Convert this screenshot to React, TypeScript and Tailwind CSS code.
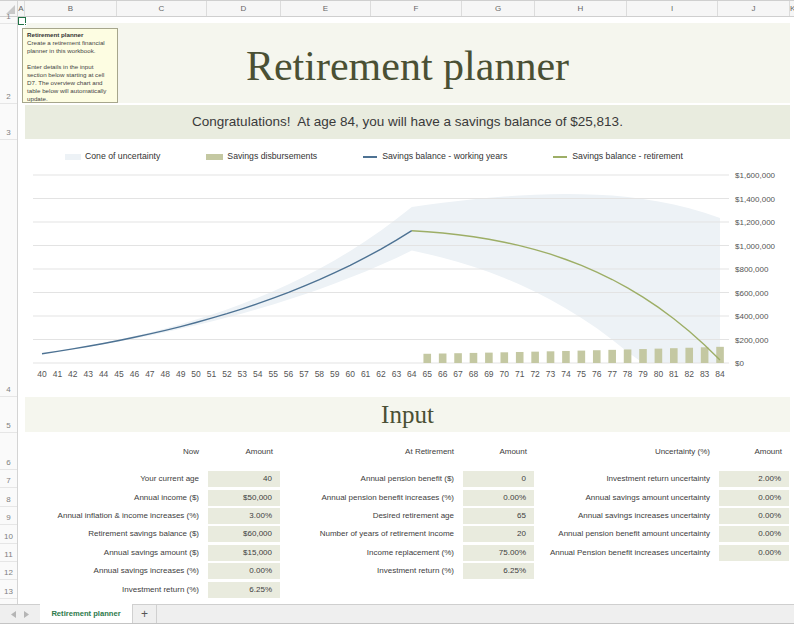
import React from 'react'

const GRID = 'grid grid-cols-[7px_92px_90px_74px_90px_91px_73px_92px_91px_72px_1fr]'
const COLS = ['A', 'B', 'C', 'D', 'E', 'F', 'G', 'H', 'I', 'J', 'K']

const ROWS = [
  { n: 1, h: 'h-[7px]' },
  { n: 2, h: 'h-[80px]' },
  { n: 3, h: 'h-[36px]' },
  { n: 4, h: 'h-[257px]' },
  { n: 5, h: 'h-[36px]' },
  { n: 6, h: 'h-[37px]' },
  { n: 7, h: 'h-[18.4px]' },
  { n: 8, h: 'h-[18.4px]' },
  { n: 9, h: 'h-[18.4px]' },
  { n: 10, h: 'h-[18.4px]' },
  { n: 11, h: 'h-[18.4px]' },
  { n: 12, h: 'h-[18.4px]' },
  { n: 13, h: 'h-[18.4px]' },
]

const NOW = [
  ['Your current age', '40'],
  ['Annual income ($)', '$50,000'],
  ['Annual inflation & income increases (%)', '3.00%'],
  ['Retirement savings balance ($)', '$60,000'],
  ['Annual savings amount ($)', '$15,000'],
  ['Annual savings increases (%)', '0.00%'],
  ['Investment return (%)', '6.25%'],
]
const AT_RETIREMENT = [
  ['Annual pension benefit ($)', '0'],
  ['Annual pension benefit increases (%)', '0.00%'],
  ['Desired retirement age', '65'],
  ['Number of years of retirement income', '20'],
  ['Income replacement (%)', '75.00%'],
  ['Investment return (%)', '6.25%'],
]
const UNCERTAINTY = [
  ['Investment return uncertainty', '2.00%'],
  ['Annual savings amount uncertainty', '0.00%'],
  ['Annual savings increases uncertainty', '0.00%'],
  ['Annual pension benefit amount uncertainty', '0.00%'],
  ['Annual Pension benefit increases uncertainty', '0.00%'],
]

// ---- chart model ----
function withdrawal(age: number) {
  return 0.75 * 50000 * Math.pow(1.03, age - 40)
}
function simulate(rate: number) {
  const out: number[] = []
  let b = 60000
  for (let age = 40; age <= 84; age++) {
    b = age < 65 ? b * (1 + rate) + 15000 : Math.max(0, b * (1 + rate) - withdrawal(age))
    out.push(b)
  }
  return out
}
const AGES = Array.from({ length: 45 }, (_, i) => 40 + i)
const base = simulate(0.0625)
const hi = simulate(0.0725)
const lo = simulate(0.0525)
const X = (age: number) => 17 + (age - 40) * 15.41
const Y = (v: number) => 189 - (v * 23.5) / 200000

const pts = (ages: number[], vals: number[]) =>
  ages.map((a) => `${X(a).toFixed(1)},${Y(vals[a - 40]).toFixed(1)}`).join(' ')

function Chart() {
  const working = pts(AGES.filter((a) => a <= 64), base)
  const retire = pts(AGES.filter((a) => a >= 64), base)
  const cone = pts(AGES, hi) + ' ' + pts([...AGES].reverse(), lo)
  const grid = Array.from({ length: 9 }, (_, k) => k * 200000)
  return (
    <svg width={765} height={223} className="overflow-visible block" style={{ fontFamily: '"Liberation Sans", Arial, sans-serif' }}>
      <polygon points={cone} fill="#edf2f6" />
      {grid.map((v) => (
        <line key={v} x1={8} x2={704} y1={Y(v)} y2={Y(v)} stroke="#e3e3e3" strokeWidth={1} />
      ))}
      {AGES.filter((a) => a >= 65).map((a) => {
        const y = Y(withdrawal(a))
        return <rect key={a} x={X(a) - 3.8} y={y} width={7.6} height={189 - y} fill="#c4c8a2" />
      })}
      <polyline points={working} fill="none" stroke="#4d7293" strokeWidth={1.4} />
      <polyline points={retire} fill="none" stroke="#9dae66" strokeWidth={1.4} />
      {grid.map((v) => (
        <text key={v} x={710} y={Y(v) + 3} fontSize={8} fill="#555">
          ${v.toLocaleString('en-US')}
        </text>
      ))}
      {AGES.map((a) => (
        <text key={a} x={X(a)} y={203} fontSize={8.5} fill="#555" textAnchor="middle">
          {a}
        </text>
      ))}
    </svg>
  )
}

function Legend() {
  return (
    <div className="flex items-center h-[34px] pl-[40px] gap-[46px] text-[8.7px] text-[#333]">
      <div className="flex items-center gap-[4px]">
        <span className="w-[16px] h-[6px] bg-[#edf2f6]" />
        <span>Cone of uncertainty</span>
      </div>
      <div className="flex items-center gap-[4px]">
        <span className="w-[17px] h-[6px] bg-[#c4c8a2]" />
        <span>Savings disbursements</span>
      </div>
      <div className="flex items-center gap-[5px]">
        <span className="w-[14px] h-[1.5px] bg-[#4d7293]" />
        <span>Savings balance - working years</span>
      </div>
      <div className="flex items-center gap-[5px]">
        <span className="w-[14px] h-[1.5px] bg-[#9dae66]" />
        <span>Savings balance - retirement</span>
      </div>
    </div>
  )
}

function Label({ text, span }: { text: string; span: string }) {
  return <div className={`${span} flex items-center justify-end pr-[8px] whitespace-nowrap`}>{text}</div>
}

function Value({ text, span }: { text: string; span: string }) {
  return (
    <div className={`${span} flex items-center`}>
      <div className="mx-[1px] w-full h-[16px] bg-[#e9ebde] flex items-center justify-end pr-[8px]">{text}</div>
    </div>
  )
}

export default function App() {
  return (
    <div className="relative w-[794px] h-[624px] overflow-hidden bg-white flex flex-col" style={{ fontFamily: '"Liberation Sans", Arial, sans-serif' }}>
      {/* column headers */}
      <div className="flex h-[17px] shrink-0 bg-[#f6f6f6] border-t border-[#cfcfcf] border-b border-b-[#cfcfcf]">
        <div className="w-[18px] shrink-0 border-r border-[#d6d6d6] flex items-end justify-end p-[2px]">
          <svg width="9" height="9" viewBox="0 0 9 9">
            <polygon points="9,0 9,9 0,9" fill="#c9c9c9" />
          </svg>
        </div>
        <div className={`${GRID} flex-1`}>
          {COLS.map((c) => (
            <div key={c} className="flex items-center justify-center text-[8px] text-[#666] border-r border-[#dcdcdc]">
              {c}
            </div>
          ))}
        </div>
      </div>

      <div className="flex flex-1 min-h-0">
        {/* row headers */}
        <div className="w-[18px] shrink-0 flex flex-col border-r border-[#d4d4d4] bg-[#fafafa]">
          {ROWS.map((r) => (
            <div key={r.n} className={`${r.h} shrink-0 flex items-end justify-center pb-[2px] text-[8px] leading-none text-[#808080] border-b border-[#e6e6e6]`}>
              {r.n}
            </div>
          ))}
          <div className="flex-1" />
        </div>

        {/* sheet */}
        <div className="flex-1 flex flex-col text-[8px] text-[#404040]">
          <div className="h-[7px] shrink-0" />
          <div className={`${GRID} h-[80px] shrink-0`}>
            <div className="col-start-2 col-span-9 mb-[1px] -mt-[1px] pt-[6px] bg-[#f5f6ee] flex items-center justify-center">
              <span className="text-[42px] leading-none text-[#4a5034]" style={{ fontFamily: '"Liberation Serif", Georgia, serif' }}>
                Retirement planner
              </span>
            </div>
          </div>
          <div className={`${GRID} h-[36px] shrink-0`}>
            <div className="col-start-2 col-span-9 my-[1px] bg-[#e9ecdf] flex items-center justify-center text-[13.5px] text-[#3a3a3a] whitespace-pre">
              Congratulations!  At age 84, you will have a savings balance of $25,813.
            </div>
          </div>
          <div className={`${GRID} h-[257px] shrink-0`}>
            <div className="col-start-2 col-span-9 flex flex-col">
              <Legend />
              <Chart />
            </div>
          </div>
          <div className={`${GRID} h-[36px] shrink-0`}>
            <div className="col-start-2 col-span-9 mb-[1px] bg-[#f5f6ee] flex items-center justify-center">
              <span className="text-[25px] leading-none text-[#4a5034]" style={{ fontFamily: '"Liberation Serif", Georgia, serif' }}>
                Input
              </span>
            </div>
          </div>
          <div className={`${GRID} h-[37px] shrink-0`}>
            <Label span="col-start-2 col-span-2" text="Now" />
            <Label span="col-start-4" text="Amount" />
            <Label span="col-start-5 col-span-2" text="At Retirement" />
            <Label span="col-start-7" text="Amount" />
            <Label span="col-start-8 col-span-2" text="Uncertainty (%)" />
            <Label span="col-start-10" text="Amount" />
          </div>
          {NOW.map((row, i) => (
            <div key={i} className={`${GRID} h-[18.4px] shrink-0`}>
              <Label span="col-start-2 col-span-2" text={row[0]} />
              <Value span="col-start-4" text={row[1]} />
              {AT_RETIREMENT[i] && (
                <>
                  <Label span="col-start-5 col-span-2" text={AT_RETIREMENT[i][0]} />
                  <Value span="col-start-7" text={AT_RETIREMENT[i][1]} />
                </>
              )}
              {UNCERTAINTY[i] && (
                <>
                  <Label span="col-start-8 col-span-2" text={UNCERTAINTY[i][0]} />
                  <Value span="col-start-10" text={UNCERTAINTY[i][1]} />
                </>
              )}
            </div>
          ))}
          <div className="flex-1" />
        </div>
      </div>

      {/* sheet tabs */}
      <div className="h-[20px] shrink-0 flex bg-[#efefef] border-t border-[#cfcfcf] border-b border-b-[#c4c4c4]">
        <div className="w-[40px] flex items-center justify-center gap-[8px]">
          <svg width="5" height="7" viewBox="0 0 5 7"><polygon points="5,0 5,7 0,3.5" fill="#b5b5b5" /></svg>
          <svg width="5" height="7" viewBox="0 0 5 7"><polygon points="0,0 0,7 5,3.5" fill="#b5b5b5" /></svg>
        </div>
        <div className="w-[93px] bg-white -mt-[1px] flex items-center justify-center text-[7.6px] font-bold text-[#2d7a4c] border-r border-[#d0d0d0]">
          Retirement planner
        </div>
        <div className="w-[24px] flex items-center justify-center text-[12px] leading-none text-[#555] border-r border-[#d0d0d0]">+</div>
      </div>

      {/* selected cell A1 */}
      <div className="absolute left-[18px] top-[17px] w-[8px] h-[8px] border-[1.5px] border-[#217346]" />
      <div className="absolute left-[24px] top-[23px] w-[3px] h-[3px] bg-[#217346] border border-white" />

      {/* input message tooltip */}
      <div className="absolute left-[22px] top-[28px] w-[96px] h-[75px] border border-[#a6a68c] bg-[#fdfde2] px-[4px] py-[2px] text-[6.2px] leading-[8px] text-[#444] whitespace-nowrap">
        <div className="font-bold text-[#333]">Retirement planner</div>
        <div>Create a retirement financial</div>
        <div>planner in this workbook.</div>
        <div className="h-[8px]" />
        <div>Enter details in the input</div>
        <div>section below starting at cell</div>
        <div>D7. The overview chart and</div>
        <div>table below will automatically</div>
        <div>update.</div>
      </div>
    </div>
  )
}
